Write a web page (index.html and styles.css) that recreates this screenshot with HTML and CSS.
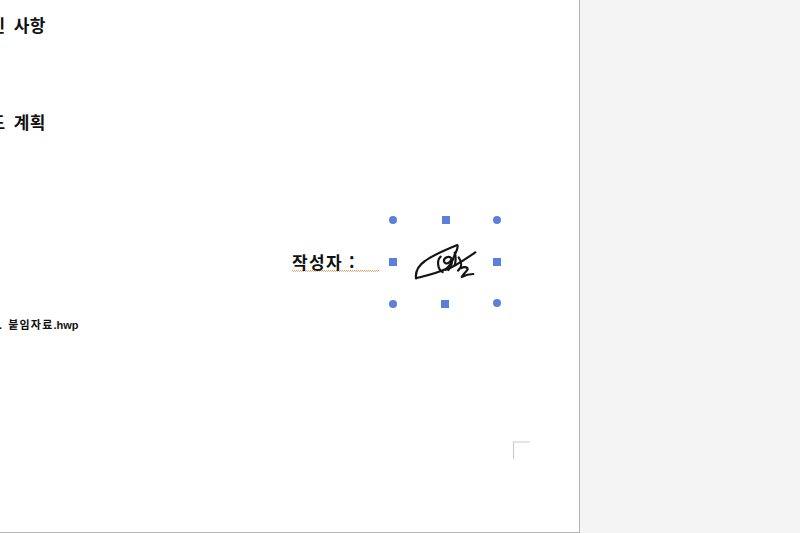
FILE: index.html
```html
<!DOCTYPE html>
<html lang="ko">
<head>
<meta charset="utf-8">
<title>문서</title>
<link rel="stylesheet" href="styles.css">
</head>
<body>
<main class="page">
  <h2 class="heading heading-a">인 사항</h2>
  <h2 class="heading heading-b">도 계획</h2>
  <p class="author"><span class="author-text">작성자 :</span></p>
  <p class="attach">1. <span class="attach-name">붙임자료</span>.hwp</p>
  <div class="selection">
    <svg class="signature" viewBox="0 0 390 315" aria-hidden="true">
      <path d="M108 205C106 186 116 166 135 153C155 138 195 120 232 105C236 112 230 122 224 134C220 148 212 168 196 178C170 190 135 198 108 205Z"/>
      <path d="M196 180C222 172 252 150 286 127"/>
      <path d="M182 140C170 150 172 178 188 186"/>
      <path d="M214 144C204 136 190 144 192 154C196 166 210 160 215 147C217 158 213 172 205 180"/>
      <path d="M224 128C228 140 228 152 224 166M236 142C246 156 246 172 234 182"/>
      <path d="M244 174C252 169 263 171 263 178C258 186 250 192 245 201C256 195 268 192 280 192"/>
    </svg>
    <span class="handle round h-tl"></span>
    <span class="handle h-tc"></span>
    <span class="handle round h-tr"></span>
    <span class="handle h-ml"></span>
    <span class="handle h-mr"></span>
    <span class="handle round h-bl"></span>
    <span class="handle h-bc"></span>
    <span class="handle round h-br"></span>
  </div>
  <div class="corner"></div>
</main>
</body>
</html>
```

FILE: styles.css
```css
html, body {
  margin: 0;
  height: 100%;
  overflow: hidden;
}
body {
  background: #f4f4f4;
  font-family: "Noto Sans CJK KR", "Liberation Sans", sans-serif;
  color: #111;
}
.page {
  position: relative;
  width: 579px;
  height: 532px;
  background: #fff;
  border-right: 1px solid #b4b4b4;
  border-bottom: 1px solid #b4b4b4;
  overflow: hidden;
}
.heading {
  position: absolute;
  margin: 0;
  font-size: 17px;
  line-height: 20px;
  font-weight: 700;
  letter-spacing: 0.4px;
  word-spacing: 3px;
  white-space: nowrap;
}
.heading-a { left: -10.5px; top: 15px; }
.heading-b { left: -10.5px; top: 112px; }
.author {
  position: absolute;
  left: 292px;
  top: 252px;
  margin: 0;
  width: 87px;
  height: 20px;
  font-size: 17px;
  line-height: 20px;
  font-weight: 700;
  letter-spacing: 1.3px;
  white-space: pre;
  background:
    repeating-linear-gradient(90deg, #ea9a50 0 1px, transparent 1px 2px) 0 18px / 100% 1px no-repeat,
    repeating-linear-gradient(90deg, transparent 0 1px, #f0b880 1px 2px) 0 19px / 100% 1px no-repeat;
}
.attach {
  position: absolute;
  left: -7px;
  top: 318px;
  margin: 0;
  font-family: "Liberation Sans", "Noto Sans CJK KR", sans-serif;
  font-size: 11px;
  line-height: 15px;
  font-weight: 700;
  word-spacing: 3px;
  white-space: nowrap;
}
.attach-name { letter-spacing: 1.2px; }
.selection {
  position: absolute;
  left: 380px;
  top: 210px;
  width: 130px;
  height: 105px;
}
.signature {
  display: block;
  width: 130px;
  height: 105px;
  fill: none;
  stroke: #141414;
  stroke-width: 6.5;
  stroke-linecap: round;
  stroke-linejoin: round;
}
.handle {
  position: absolute;
  width: 8px;
  height: 8px;
  background: #5b7fdb;
}
.round { border-radius: 50%; }
.h-tl { left: 9px; top: 6px; }
.h-tc { left: 62px; top: 6px; }
.h-tr { left: 113px; top: 6px; }
.h-ml { left: 9px; top: 48px; }
.h-mr { left: 113px; top: 48px; }
.h-bl { left: 9px; top: 90px; }
.h-bc { left: 61px; top: 90px; }
.h-br { left: 113px; top: 89px; }
.corner {
  position: absolute;
  left: 513px;
  top: 441px;
  width: 16px;
  height: 16px;
  border-left: 1px solid #c8c8c8;
  border-top: 2px solid #e4e4e4;
}
```
